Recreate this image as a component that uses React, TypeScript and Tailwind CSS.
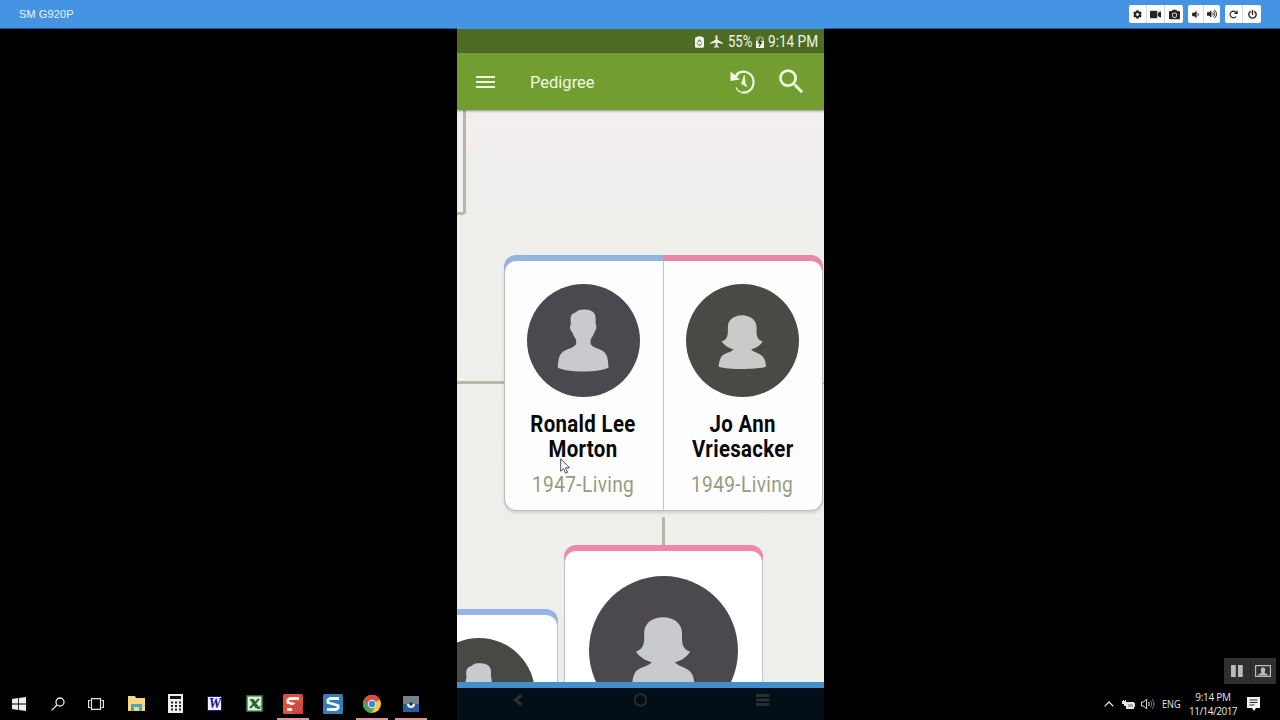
import type { ReactNode } from "react";
import { FaCamera, FaCog, FaPowerOff, FaVideo, FaVolumeDown, FaVolumeUp } from "react-icons/fa";
import { FaArrowRotateRight } from "react-icons/fa6";
import { MdAirplanemodeActive, MdSearch } from "react-icons/md";

const MALE =
  "M43.500 39 C42.800 33 43 29.500 48.500 28 C51 24.8 56 25 60 25.4 C65 26 67.800 29 68 33 L68 39.500 C69.300 42 68.800 46 66.800 47.500 C66 51 63.500 53.500 63 55.500 L63 59.500 C66 64 72 63.800 76.500 67.500 C80.500 71 80.300 78 80.800 82.700 C72 88 39 88 30.500 82.700 C31 78 31 71.500 34.500 68.200 C39 64 46 64 48.700 59.500 L48.700 55.500 C48 53.500 45.800 51 45 48 C42.600 46.500 42 42 43.300 40.500 Z";
const FEMALE =
  "M55.7 31 C47 31 41.8 36 41.5 42 C41.300 46 42 49 40.500 52.500 C39.500 55 37.500 56.200 35.300 56.800 C37.500 60.500 42 63.500 47.300 65 C44 68 38 68.500 35 72 C33 75 32.700 79 32.300 82 C42 85 70 85 79.300 82 C79 78 78.500 74.500 76 71.800 C72.500 68.500 67.500 68 64.500 65 C70 63.500 74 60.500 76 56.800 C73.500 56.200 71.800 55 70.800 52.500 C69.500 49 70.100 46 69.900 42 C69.500 36 64 31 55.7 31 Z";

type Sex = "male" | "female";

function Avatar({ sex, className, shade = "#484848" }: { sex: Sex; className: string; shade?: string }) {
  return (
    <svg viewBox="0 0 112 112" className={`shrink-0 ${className}`}>
      <circle cx="56" cy="56" r="56" fill={shade} />
      <path d={sex === "male" ? MALE : FEMALE} fill={shade === "#484a45" ? "#c9cbc9" : "#c9cace"} />
    </svg>
  );
}

function Person({ sex, first, last, years, shade }: { sex: Sex; first: string; last: string; years: string; shade: string }) {
  return (
    <div className="flex w-[159px] shrink-0 flex-col items-center pt-[23px] pr-[2px] whitespace-nowrap">
      <Avatar sex={sex} shade={shade} className="size-[113px]" />
      <div className="mt-[15px] scale-x-[0.85] text-center text-[24px] leading-[24.5px] font-bold tracking-[0.4px] text-[#080808]">
        {first}
        <br />
        {last}
      </div>
      <div className="mt-[8px] scale-x-[0.85] text-[22.5px] leading-[30px] tracking-[0.4px] text-[#9a9a80]">{years}</div>
    </div>
  );
}

function ButtonGroup({ children }: { children: ReactNode }) {
  return (
    <div className="flex h-[18px] items-center divide-x divide-[#d5dbe2] overflow-hidden rounded-[2px] bg-white text-[10px] text-[#262626] *:flex *:h-full *:w-[18px] *:items-center *:justify-center">
      {children}
    </div>
  );
}

function MirrorHeader() {
  return (
    <header className="flex h-[28px] shrink-0 items-center bg-[#4594e4] pr-[19px] pl-[19px]">
      <span className="text-[11px] tracking-[0.1px] text-[#e8f6ff]">SM G920P</span>
      <div className="ml-auto flex gap-[5px]">
        <ButtonGroup>
          <span><FaCog size={9} /></span>
          <span><FaVideo size={11} /></span>
          <span><FaCamera size={11} /></span>
        </ButtonGroup>
        <ButtonGroup>
          <span className="w-4!"><FaVolumeDown size={9} /></span>
          <span className="w-4!"><FaVolumeUp size={10} /></span>
        </ButtonGroup>
        <ButtonGroup>
          <span><FaArrowRotateRight size={9} /></span>
          <span><FaPowerOff size={9} /></span>
        </ButtonGroup>
      </div>
    </header>
  );
}

function StatusBar() {
  return (
    <div className="flex h-[25px] shrink-0 items-center border-t border-[#4594e4] bg-[#4d6b22] pt-px pr-[6px] font-[Roboto] text-[16px] text-[#eff5e8]">
      <svg viewBox="0 0 10 13" className="ml-auto h-[12px] w-[9px]">
        <path d="M3 0h4v1h2l1 2v9l-1 1H1l-1-1V3l1-2h2z" fill="currentColor" />
        <path d="M3 7l2-3 2 3M2.5 8l1.5 2h2l1.5-2" fill="none" stroke="#4d6b22" strokeWidth="1.1" />
      </svg>
      <MdAirplanemodeActive size={15} className="ml-[5px]" />
      <span className="mt-px ml-[4px] w-[25px]">
        <span className="block w-[32px] origin-left scale-x-[0.82]">55%</span>
      </span>
      <svg viewBox="0 0 8 12" className="ml-[3px] h-[12px] w-[8px]">
        <path d="M2 0h4v1h2v5H0V1h2z" fill="#87986d" />
        <path d="M0 5h8v7H0z" fill="currentColor" />
        <path d="M5 2L2 7h2l-1 4 3-5H4z" fill="#26370c" stroke="#26370c" strokeWidth=".5" />
      </svg>
      <span className="mt-px ml-[4px] w-[50px] whitespace-nowrap">
        <span className="block w-[62px] origin-left scale-x-[0.85]">9:14 PM</span>
      </span>
    </div>
  );
}

function AppBar() {
  return (
    <div className="relative z-10 flex h-[57px] shrink-0 items-center bg-[#729d30] pl-[19px] font-[Roboto] text-[#eefbe0] shadow-[0_1px_2px_rgba(0,0,0,0.4)]">
      <div className="flex w-[19px] flex-col gap-[3px] *:h-[2px] *:bg-[#eefbe0]">
        <span />
        <span />
        <span />
      </div>
      <span className="mt-[4px] ml-[35px] text-[16.5px]">Pedigree</span>
      <svg viewBox="0 0 26 26" className="mr-[19px] ml-auto size-[26px]" fill="none" stroke="currentColor">
        <path d="M6 5.500C14-1 23.500 4.500 23.500 13c0 8-6.500 11.500-12 10.300" strokeWidth="2.2" />
        <path d="M12 23.500C9 22.700 7 21 6 18.500" strokeWidth="1.2" />
        <path d="M.500 2.500V12l9.500-1.500-3-2L9 5 5 6z" fill="currentColor" stroke="none" />
        <path d="M14.300 6l-2.800 8.800 5.500 2.800-1.700-3z" fill="currentColor" strokeWidth=".6" />
      </svg>
      <MdSearch size={33} className="mr-[16px]" />
    </div>
  );
}

function Pedigree() {
  return (
    <div className="relative flex-1 overflow-hidden bg-[linear-gradient(#f2efee_0,#f2eeee_42px,#edefed_46px,#edefed_103px,#eff0eb_107px,#eeefea_100%)] font-[Roboto]">
      {/* connectors */}
      <div className="absolute top-[-10px] left-[-10px] h-[115px] w-[19px] rounded-br-[4px] border-r-[3px] border-b-[3px] border-[#b9b6a8] bg-[#f3f1ed]" />
      <div className="absolute top-[271px] left-0 h-[3px] w-[47px] bg-[#b9b8a9]" />
      <div className="absolute top-[272px] right-0 h-[2px] w-[2px] bg-[#b9b8a9]" />
      <div className="absolute top-[407px] left-[205px] h-[30px] w-[3px] bg-[#b5b5a8]" />

      {/* couple */}
      <div className="absolute top-[145px] left-[47px] h-[256px] w-[319px] overflow-hidden rounded-[12px] bg-[linear-gradient(90deg,#92b4e1_159px,#ea88ab_159px)] shadow-[0_2px_3px_rgba(0,0,0,0.12)]">
        <div className="mt-[6px] flex h-[250px] divide-x divide-[#c5c5c8] overflow-hidden rounded-[12px] border border-t-0 border-[#b9bbc0] bg-[#fefefe]">
          <Person sex="male" first="Ronald Lee" last="Morton" years="1947-Living" shade="#49494f" />
          <Person sex="female" first="Jo Ann" last="Vriesacker" years="1949-Living" shade="#484a45" />
        </div>
      </div>

      {/* child */}
      <div className="absolute top-[435px] left-[107px] h-[256px] w-[199px] overflow-hidden rounded-[12px] bg-[#ee88aa]">
        <div className="mt-[6px] flex h-[250px] justify-center rounded-[12px] border border-t-0 border-[#bfc0c2] bg-white pt-[25px]">
          <Avatar sex="female" shade="#4b494d" className="size-[149px]" />
        </div>
      </div>

      {/* spouse */}
      <div className="absolute top-[499px] left-[-58px] h-[200px] w-[159px] overflow-hidden rounded-[12px] bg-[#96b5e5]">
        <div className="mt-[6px] flex h-[194px] justify-center rounded-[12px] border border-t-0 border-[#bfc0c2] bg-white pt-[23px]">
          <Avatar sex="male" shade="#484845" className="size-[112px]" />
        </div>
      </div>

      {/* mouse pointer */}
      <svg viewBox="0 0 11 16" className="absolute top-[348px] left-[103px] h-[16px] w-[11px]">
        <path d="M.7.8v12.4l2.8-2.7 2.1 4.7 2-.9-2.1-4.5h4z" fill="#fff" stroke="#222" strokeWidth=".8" />
      </svg>
    </div>
  );
}

function SnagitIcon({ red }: { red?: boolean }) {
  return (
    <svg viewBox="0 0 20 20" className="size-[20px]">
      <rect width="20" height="20" rx="1.5" fill={red ? "#dd503b" : "#347fb8"} />
      <path d="M16 4.500H7L5 6v2.500l10 3V14l-2 1.500H4" fill="none" stroke="#f7f7f7" strokeWidth="2.8" />
      {red && <circle cx="14.5" cy="14.5" r="5.2" fill="#d64848" stroke="#9e302e" strokeWidth=".6" />}
    </svg>
  );
}

function ChromeIcon() {
  return (
    <svg viewBox="0 0 20 20" className="size-[18px]">
      <circle cx="10" cy="10" r="10" fill="#fac832" />
      <path d="M10 10L1.3 5a10 10 0 0 1 17.4 0z" fill="#dd4e3f" />
      <path d="M10 10L1.3 5a10 10 0 0 0 8.2 15l4.5-8z" fill="#43a45a" />
      <path d="M10 5.5h9a10 10 0 0 0-17.7-.5L6 12z" fill="#dd4e3f" />
      <circle cx="10" cy="10" r="4.7" fill="#f5f5f5" />
      <circle cx="10" cy="10" r="3.6" fill="#4285e8" />
    </svg>
  );
}

const taskItems: { name: string; running?: boolean; icon: ReactNode }[] = [
  {
    name: "start",
    icon: (
      <svg viewBox="0 0 14 14" className="size-[14px]" fill="#eee">
        <path d="M0 2l6-1v5.6H0zM6.8.9L14 0v6.6H6.8zM0 7.4h6V13l-6-1zM6.8 7.4H14V14l-7.2-1z" />
      </svg>
    ),
  },
  {
    name: "search",
    icon: (
      <svg viewBox="0 0 14 14" className="size-[14px]" fill="none" stroke="#e5e5e5" strokeWidth="1.3">
        <circle cx="9" cy="5" r="4" />
        <path d="M6 8L.6 13.4" />
      </svg>
    ),
  },
  {
    name: "task view",
    icon: (
      <svg viewBox="0 0 16 12" className="mr-[2px] h-[12px] w-[16px]" fill="none" stroke="#e5e5e5" strokeWidth="1.2">
        <path d="M3.5.6h9v10.8h-9zM2.5 2.5H.6v7h1.9M13.5 2.5h1.9v7h-1.9" />
      </svg>
    ),
  },
  {
    name: "explorer",
    icon: (
      <svg viewBox="0 0 17 15" className="h-[15px] w-[17px]">
        <path d="M0 0h7l1 2h9v13H0z" fill="#f4d77e" />
        <path d="M3 15V8h11v7h-3v-4H6v4z" fill="#42a7cc" />
      </svg>
    ),
  },
  {
    name: "calculator",
    icon: (
      <svg viewBox="0 0 15 19" className="h-[19px] w-[15px]">
        <path d="M0 0h15v19H0z" fill="#efefef" />
        <path d="M2 2h11v3H2z" fill="#151515" />
        <path d="M3 8.5h10M3 12h10M3 15.5h10" stroke="#222" strokeWidth="2" strokeDasharray="2 2" />
      </svg>
    ),
  },
  {
    name: "word",
    icon: (
      <span className="flex h-[15px] w-[15px] items-center justify-center border border-[#151c95] bg-[#eef] font-['Liberation_Serif'] text-[14px] leading-none font-bold text-[#101477] italic">
        W
      </span>
    ),
  },
  {
    name: "excel",
    icon: (
      <svg viewBox="0 0 17 17" className="size-[17px]">
        <path d="M.8.8h15.4v15.4H.8z" fill="#e3eee2" stroke="#276829" strokeWidth="1.6" />
        <path d="M3.5 4h4l6 9h-4z" fill="#236b2b" />
        <path d="M13 4L4 13" stroke="#236b2b" strokeWidth="2" />
        <path d="M11 13.5h3v-3" fill="none" stroke="#236b2b" />
      </svg>
    ),
  },
  { name: "recorder", running: true, icon: <SnagitIcon red /> },
  { name: "snagit", icon: <SnagitIcon /> },
  { name: "chrome", running: true, icon: <ChromeIcon /> },
  {
    name: "sidesync",
    running: true,
    icon: (
      <svg viewBox="0 0 16 16" className="size-[16px]">
        <path d="M0 0h16v16H0z" fill="#245f9e" />
        <path d="M0 0h16v8H0z" fill="#71838c" />
        <path d="M4 8a4 4 0 0 0 8 0z" fill="#eee" />
        <circle cx="8" cy="8" r="1.8" fill="#26394b" />
      </svg>
    ),
  },
];

function Taskbar() {
  return (
    <footer className="flex h-[32px] shrink-0 bg-black">
      <div className="flex w-[457px] shrink-0">
        {taskItems.map((item) => (
          <div key={item.name} className="flex w-[39.2px] shrink-0 flex-col items-center first:-ml-[0.6px]">
            <div className="flex flex-1 items-center pt-px">{item.icon}</div>
            <div className={`h-[2px] w-[32px] ${item.running ? "bg-[#e5958f]" : ""}`} />
          </div>
        ))}
      </div>
      <div className="flex h-full w-[367px] shrink-0 bg-[#030f18] pt-[4px] text-[#292f33]">
        <svg viewBox="0 0 367 16" className="h-[16px] w-full" fill="none" stroke="currentColor">
          <path d="M64.500 3l-6 5 6 5" strokeWidth="3" />
          <circle cx="183.5" cy="8" r="5.8" strokeWidth="1.8" />
          <path d="M299 3.5h13.500M299 8h13.500M299 12.5h13.500" strokeWidth="2.800" />
        </svg>
      </div>
      <div className="flex flex-1 items-center justify-end text-[#e5e5e5]">
        <svg viewBox="0 0 10 6" className="h-[6px] w-[10px]" fill="none" stroke="currentColor" strokeWidth="1.3">
          <path d="M.6 5.4L5 1l4.4 4.4" />
        </svg>
        <svg viewBox="0 0 13 9" className="ml-[8px] h-[9px] w-[13px]" fill="currentColor">
          <path d="M4 2h8v1h1v4h-1v2H4V6H2V4H0V1h1V0h1v1h1V0h1z" />
          <path d="M6 4h5v3H6z" fill="#aaa" />
        </svg>
        <svg viewBox="0 0 14 12" className="ml-[6px] h-[12px] w-[14px]" fill="none" stroke="currentColor">
          <path d="M.6 4h2l3-3v10l-3-3h-2z" />
          <path d="M7.5 4a3 3 0 0 1 0 4" />
          <path d="M9.3 2.5a5 5 0 0 1 0 7M11 1a7 7 0 0 1 0 10" stroke="#777" />
        </svg>
        <span className="ml-[7px] w-[19px] font-['Open_Sans'] text-[10px]">
          <span className="block origin-left scale-x-[0.92]">ENG</span>
        </span>
        <div className="ml-[8px] w-[48px] text-center font-['Open_Sans'] text-[10px] leading-[14.5px] tracking-[-0.5px] whitespace-nowrap">
          <span className="tracking-[-0.3px]">9:14 PM</span>
          <br />
          11/14/2017
        </div>
        <svg viewBox="0 0 13 14" className="mr-[20px] ml-[10px] h-[14px] w-[13px]">
          <path d="M0 0h13v11H9l-2 3-2-3H0z" fill="#f4f4f4" />
          <path d="M2.5 3h8M2.5 5.5h8M2.5 8h5" stroke="#222" />
        </svg>
      </div>
    </footer>
  );
}

function RecorderControls() {
  return (
    <div className="mr-[4px] mb-[4px] flex h-[26px] w-[52px] divide-x divide-[#242424] bg-[#303030] text-[#bbb] *:flex *:flex-1 *:items-center *:justify-center">
      <div>
        <svg viewBox="0 0 12 12" className="size-[12px]" fill="currentColor">
          <path d="M0 0h4.8v12H0zM7 0h4.8v12H7z" />
        </svg>
      </div>
      <div>
        <svg viewBox="0 0 16 12" className="h-[12px] w-[16px]" fill="none" stroke="currentColor" strokeWidth="1.2">
          <path d="M.6.6h14.8v10.8H.6z" />
          <path d="M3 10.500c0-2 3-1.500 3.500-3-1.500-3-.5-5 1.500-5s3 2 1.500 5c.5 1.500 3.500 1 3.500 3z" fill="currentColor" stroke="none" />
        </svg>
      </div>
    </div>
  );
}

export default function App() {
  return (
    <div className="flex h-screen w-screen flex-col overflow-hidden bg-black font-['Liberation_Sans',sans-serif]">
      <MirrorHeader />
      <main className="flex min-h-0 flex-1">
        <div className="w-[457px] shrink-0 border-t border-[#4594e4]/60" />
        <section className="flex w-[367px] shrink-0 flex-col border-b-6 border-[#428fcb]">
          <StatusBar />
          <AppBar />
          <Pedigree />
        </section>
        <div className="flex flex-1 items-end justify-end border-t border-[#4594e4]/60">
          <RecorderControls />
        </div>
      </main>
      <Taskbar />
    </div>
  );
}
